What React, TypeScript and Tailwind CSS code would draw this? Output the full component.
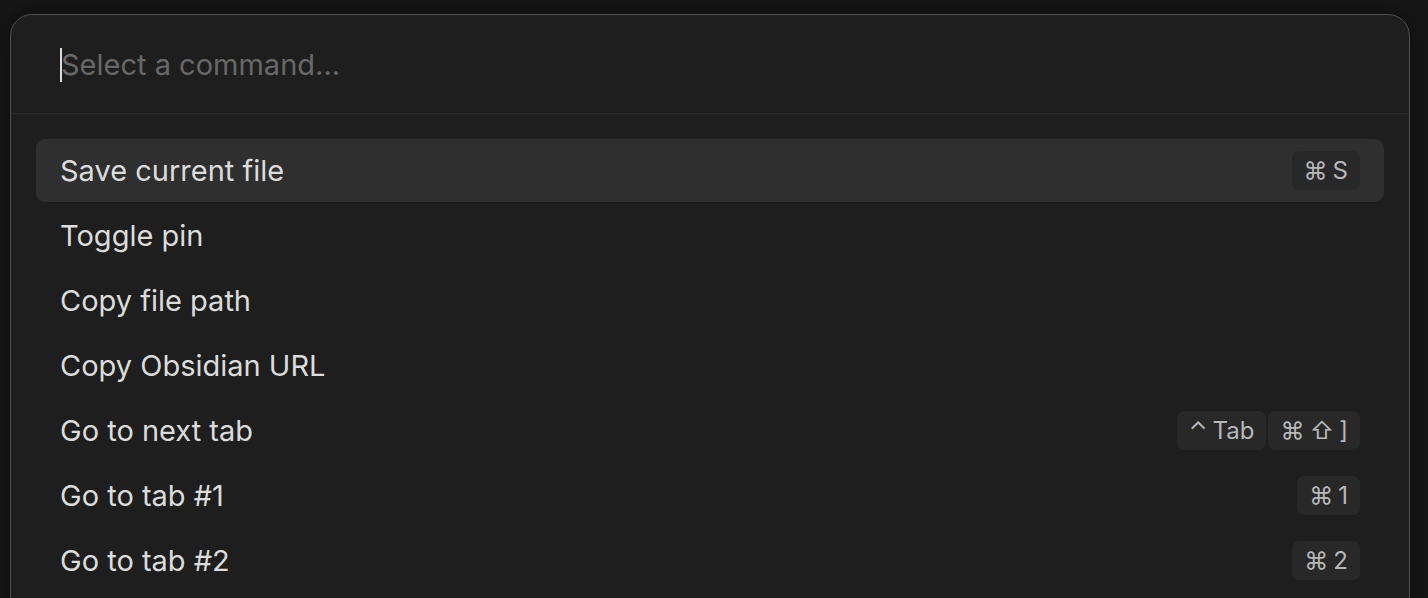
import React from "react";

type Item = { label: string; keys: string[][] };

const items: Item[] = [
  { label: "Save current file", keys: [["⌘", "S"]] },
  { label: "Toggle pin", keys: [] },
  { label: "Copy file path", keys: [] },
  { label: "Copy Obsidian URL", keys: [] },
  { label: "Go to next tab", keys: [["⌃", "Tab"], ["⌘", "⇧", "]"]] },
  { label: "Go to tab #1", keys: [["⌘", "1"]] },
  { label: "Go to tab #2", keys: [["⌘", "2"]] },
];

function Kbd({ parts }: { parts: string[] }) {
  return (
    <span className="flex h-[39px] items-center gap-[5px] rounded-[7px] bg-[#282828] px-[12px] text-[24px] leading-none text-[#b8b8b8]">
      {parts.map((p, i) => (
        <span key={i}>{p}</span>
      ))}
    </span>
  );
}

export default function App() {
  return (
    <div
      className="h-[598px] w-[1428px] overflow-hidden bg-[#161616] pl-[10px] pr-[18px] pt-[14px]"
      style={{ fontFamily: "Inter, 'DejaVu Sans', sans-serif" }}
    >
      <div className="h-[620px] rounded-[22px] border border-[#505050] bg-[#1e1e1e] shadow-[0_0_20px_rgba(0,0,0,0.5)]">
        <div className="flex h-[99px] items-center border-b border-[#2a2a2a] pl-[49px] pt-[2px]">
          <span className="mr-[-1px] h-[34px] w-[2px] bg-[#dcdcdc]" />
          <span className="text-[29px] text-[#686868]">Select a command...</span>
        </div>
        <div className="flex flex-col gap-[2px] px-[25px] pt-[25px]">
          {items.map((it, i) => (
            <div
              key={i}
              className={
                "flex h-[63px] items-center justify-between rounded-[9px] px-[24px] " +
                (i === 0 ? "bg-[#2f2f2f]" : "")
              }
            >
              <span className="text-[29px] text-[#dcdcdc]">{it.label}</span>
              <span className="flex gap-[2px]">
                {it.keys.map((k, j) => (
                  <Kbd key={j} parts={k} />
                ))}
              </span>
            </div>
          ))}
        </div>
      </div>
    </div>
  );
}
